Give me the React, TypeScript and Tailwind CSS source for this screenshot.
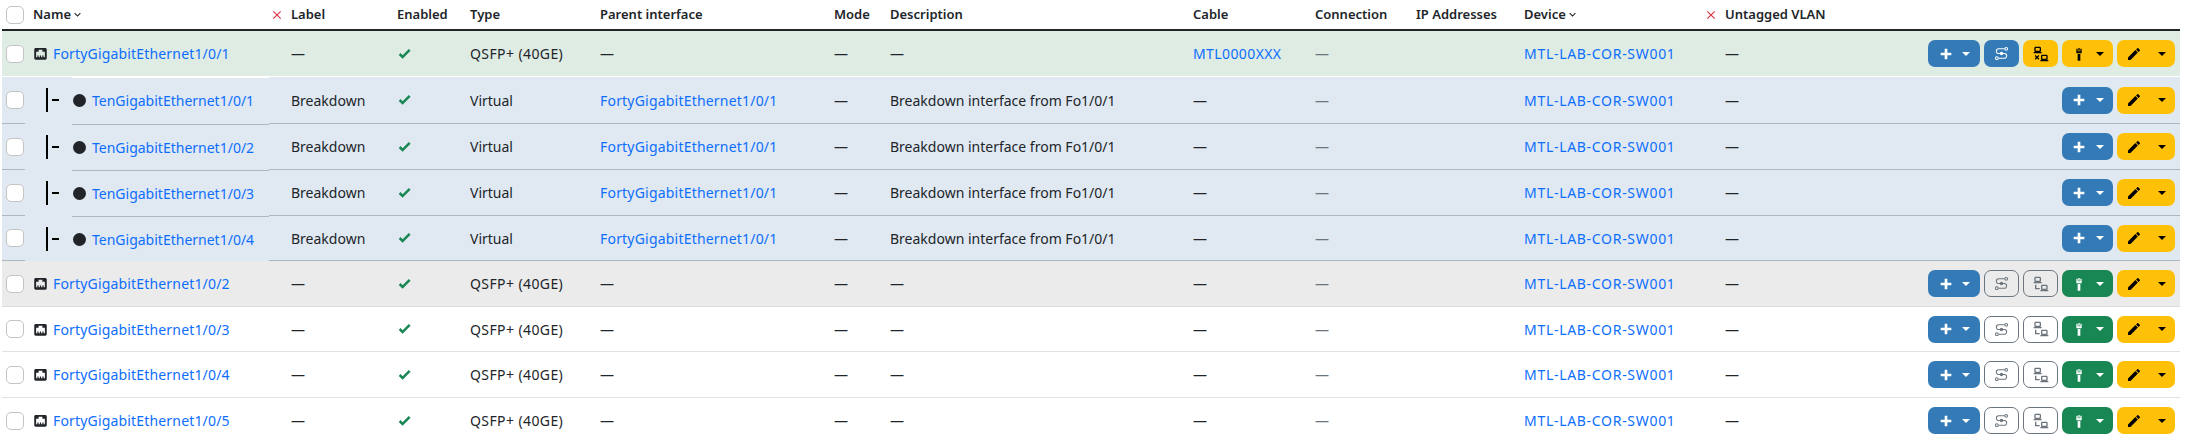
const LINK = "text-[#0d6efd]";

type Kind = "forty" | "ten";
type Row = {
  name: string;
  kind: Kind;
  bg: string;
  line: string;
  height: string;
  cable?: string;
  connected?: boolean;
  first?: boolean;
  last?: boolean;
};

const COLS = [23, 244, 120, 73, 130, 234, 56, 303, 122, 101, 108, 186, 200, 278];

const ROWS: Row[] = [
  { name: "FortyGigabitEthernet1/0/1", kind: "forty", bg: "bg-[#deece4]", line: "border-white", height: "h-[46px]", cable: "MTL0000XXX", connected: true },
  { name: "TenGigabitEthernet1/0/1", kind: "ten", bg: "bg-[#e0e9f2]", line: "border-[#aeb6c0]", height: "h-[47px]", first: true },
  { name: "TenGigabitEthernet1/0/2", kind: "ten", bg: "bg-[#e0e9f2]", line: "border-[#aeb6c0]", height: "h-[46px]" },
  { name: "TenGigabitEthernet1/0/3", kind: "ten", bg: "bg-[#e0e9f2]", line: "border-[#aeb6c0]", height: "h-[46px]" },
  { name: "TenGigabitEthernet1/0/4", kind: "ten", bg: "bg-[#e0e9f2]", line: "border-[#aeb6c0]", height: "h-[45px]", last: true },
  { name: "FortyGigabitEthernet1/0/2", kind: "forty", bg: "bg-[#ebebeb]", line: "border-[#dcdcdc]", height: "h-[46px]" },
  { name: "FortyGigabitEthernet1/0/3", kind: "forty", bg: "bg-white", line: "border-[#dee2e6]", height: "h-[45px]" },
  { name: "FortyGigabitEthernet1/0/4", kind: "forty", bg: "bg-white", line: "border-[#dee2e6]", height: "h-[46px]" },
  { name: "FortyGigabitEthernet1/0/5", kind: "forty", bg: "bg-white", line: "border-[#dee2e6]", height: "h-[46px]" },
];

function Mdi({ d, className }: { d: string; className: string }) {
  return (
    <svg viewBox="0 0 24 24" fill="currentColor" className={className}>
      <path d={d} />
    </svg>
  );
}

const ICONS = {
  plus: "M20 14H14V20H10V14H4V10H10V4H14V10H20V14Z",
  pencil: "M20.71,7.04C21.1,6.65 21.1,6 20.71,5.63L18.37,3.29C18,2.9 17.35,2.9 16.96,3.29L15.12,5.12L18.87,8.87M3,17.25V21H6.75L17.81,9.93L14.06,6.18L3,17.25Z",
  check: "M9,20.42L2.79,14.21L5.62,11.38L9,14.77L18.88,4.88L21.71,7.71L9,20.42Z",
  ethernet: "M7,15H9V18H11V15H13V18H15V15H17V18H19V9H15V6H9V9H5V18H7V15M4.38,3H19.63C20.94,3 22,4.06 22,5.38V19.63A2.37,2.37 0 0,1 19.63,22H4.38C3.06,22 2,20.94 2,19.63V5.38C2,4.06 3.06,3 4.38,3Z",
  cable: "M11,3V7H13V3H11M8,4V11H16V4H14V8H10V4H8M10,12V22H14V12H10Z",
  lan: "M4,1C2.89,1 2,1.89 2,3V7C2,8.11 2.89,9 4,9H1V11H13V9H10C11.11,9 12,8.11 12,7V3C12,1.89 11.11,1 10,1H4M4,3H10V7H4V3M3,13V18L3,20H10V18H5V13H3M14,13C12.89,13 12,13.89 12,15V19C12,20.11 12.89,21 14,21H11V23H23V21H20C21.11,21 22,20.11 22,19V15C22,13.89 21.11,13 20,13H14M14,15H20V19H14V15Z",
  lanOff: "M4,1C2.89,1 2,1.89 2,3V7C2,8.11 2.89,9 4,9H1V11H13V9H10C11.11,9 12,8.11 12,7V3C12,1.89 11.11,1 10,1H4M4,3H10V7H4V3M14,13C12.89,13 12,13.89 12,15V19C12,20.11 12.89,21 14,21H11V23H23V21H20C21.11,21 22,20.11 22,19V15C22,13.89 21.11,13 20,13H14M3.88,13.46L2.46,14.88L4.59,17L2.46,19.12L3.88,20.54L6,18.41L8.12,20.54L9.54,19.12L7.41,17L9.54,14.88L8.12,13.46L6,15.59L3.88,13.46M14,15H20V19H14V15Z",
  chevron: "M7.41,8.58L12,13.17L16.59,8.58L18,10L12,16L6,10L7.41,8.58Z",
  close: "M19,6.41L17.59,5L12,10.59L6.41,5L5,6.41L10.59,12L5,17.59L6.41,19L12,13.41L17.59,19L19,17.59L13.41,12L19,6.41Z",
};

function TraceIcon({ className }: { className: string }) {
  return (
    <svg viewBox="0 0 24 24" fill="none" stroke="currentColor" strokeWidth="1.7" className={className}>
      <path d="M17 4.5H7.5a3.75 3.75 0 0 0 0 7.5h9a3.75 3.75 0 0 1 0 7.5H7" />
      <circle cx="19.5" cy="4.5" r="2.2" />
      <circle cx="4.5" cy="19.5" r="2.2" />
      <circle cx="12" cy="12" r="1.8" fill="currentColor" />
    </svg>
  );
}

function Caret({ dark }: { dark?: boolean }) {
  return (
    <span
      className={`h-0 w-0 border-x-[4px] border-t-[4px] border-x-transparent ${
        dark ? "border-t-black" : "border-t-white"
      }`}
    />
  );
}

function Checkbox() {
  return <span className="block h-[18px] w-[18px] rounded-[5px] border border-[#c4c4c4] bg-white" />;
}

function Actions({ row }: { row: Row }) {
  const btn = "flex h-[27px] items-center rounded-[7px]";
  return (
    <div className="flex justify-end gap-1 pr-[5px]">
      {row.kind === "forty" && (
        <span className={`${btn} w-[52px] justify-between bg-[#337ab7] pl-[10px] pr-[10px] text-white`}>
          <Mdi d={ICONS.plus} className="h-[16px] w-[16px]" />
          <Caret />
        </span>
      )}
      {row.kind === "forty" &&
        (row.connected ? (
          <>
            <span className={`${btn} w-[35px] justify-center bg-[#337ab7] text-white`}>
              <TraceIcon className="h-[15px] w-[15px]" />
            </span>
            <span className={`${btn} w-[35px] justify-center bg-[#ffc107] text-black`}>
              <Mdi d={ICONS.lanOff} className="h-[16px] w-[16px]" />
            </span>
          </>
        ) : (
          <>
            <span className={`${btn} w-[35px] justify-center border border-[#6c757d] text-[#6c757d]`}>
              <TraceIcon className="h-[15px] w-[15px]" />
            </span>
            <span className={`${btn} w-[35px] justify-center border border-[#6c757d] text-[#6c757d]`}>
              <Mdi d={ICONS.lan} className="h-[16px] w-[16px]" />
            </span>
          </>
        ))}
      {row.kind === "ten" ? (
        <span className={`${btn} w-[51px] justify-between bg-[#337ab7] pl-[9px] pr-[9px] text-white`}>
          <Mdi d={ICONS.plus} className="h-[16px] w-[16px]" />
          <Caret />
        </span>
      ) : row.connected ? (
        <span className={`${btn} w-[51px] justify-between bg-[#ffc107] pl-[9px] pr-[9px] text-black`}>
          <Mdi d={ICONS.cable} className="h-[16px] w-[16px]" />
          <Caret dark />
        </span>
      ) : (
        <span className={`${btn} w-[51px] justify-between bg-[#198754] pl-[9px] pr-[9px] text-white`}>
          <Mdi d={ICONS.cable} className="h-[16px] w-[16px]" />
          <Caret />
        </span>
      )}
      <span className={`${btn} w-[58px] justify-between bg-[#ffc107] pl-[9px] pr-[9px] text-black`}>
        <Mdi d={ICONS.pencil} className="h-[16px] w-[16px]" />
        <Caret dark />
      </span>
    </div>
  );
}

function Head({ children, sort }: { children: string; sort?: boolean }) {
  return (
    <th className="border-b-2 border-[#212529] px-2 text-left align-middle text-[13px] font-semibold">
      <span className="flex items-center">
        {children}
        {sort && <Mdi d={ICONS.chevron} className="h-[13px] w-[13px]" />}
      </span>
    </th>
  );
}

function InterfaceRow({ row }: { row: Row }) {
  const td = `border-b ${row.line} px-2 align-middle`;
  const isTen = row.kind === "ten";
  const dash = <span>—</span>;
  return (
    <tr className={`${row.bg} ${row.height}`}>
      <td className={`border-b ${row.line} pl-1 pr-0 align-middle`}>
        <Checkbox />
      </td>
      {isTen ? (
        <td className="p-0 align-top">
          <div className="flex h-full items-stretch">
            <div className="flex w-[47px] items-center pl-[21px]">
              <span className="h-[24px] w-[2px] bg-black" />
              <span className="ml-[4px] h-[2px] w-[7px] bg-black" />
            </div>
            <div
              className={`flex h-[45px] flex-1 items-center border-t ${
                row.first ? "border-white" : "border-[#aeb6c0]"
              }`}
            >
              <span className="ml-px h-[13px] w-[13px] rounded-full bg-[#212529]" />
              <span className={`ml-[6px] ${LINK}`}>{row.name}</span>
            </div>
          </div>
        </td>
      ) : (
        <td className={td}>
          <div className="flex items-center">
            <Mdi d={ICONS.ethernet} className="h-[15px] w-[15px] text-[#212529]" />
            <span className={`ml-[5px] tracking-[0.17px] ${LINK}`}>{row.name}</span>
          </div>
        </td>
      )}
      <td className={`${td} pl-[22px]`}>{isTen ? "Breakdown" : dash}</td>
      <td className={td}>
        <Mdi d={ICONS.check} className="mt-[-1px] h-[15px] w-[15px] text-[#198754]" />
      </td>
      <td className={td}>{isTen ? "Virtual" : <span className="tracking-[0.4px]">QSFP+ (40GE)</span>}</td>
      <td className={td}>
        {isTen ? <span className={`tracking-[0.2px] ${LINK}`}>FortyGigabitEthernet1/0/1</span> : dash}
      </td>
      <td className={td}>{dash}</td>
      <td className={td}>{isTen ? "Breakdown interface from Fo1/0/1" : dash}</td>
      <td className={td}>{row.cable ? <span className={`tracking-[0.4px] ${LINK}`}>{row.cable}</span> : dash}</td>
      <td className={`${td} text-[#6c757d]`}>—</td>
      <td className={td} />
      <td className={td}>
        <span className={`tracking-[0.7px] ${LINK}`}>MTL-LAB-COR-SW001</span>
      </td>
      <td className={`${td} pl-[23px]`}>{dash}</td>
      <td className={`border-b ${row.line} p-0 align-middle`}>
        <Actions row={row} />
      </td>
    </tr>
  );
}

export default function App() {
  return (
    <div className="h-[438px] overflow-hidden bg-white pl-[2px] font-['Noto_Sans',sans-serif] text-[14px] text-[#212529]">
      <table className="w-[2178px] table-fixed border-separate border-spacing-0">
        <colgroup>
          {COLS.map((w, i) => (
            <col key={i} style={{ width: w }} />
          ))}
        </colgroup>
        <thead>
          <tr className="h-[31px]">
            <th className="border-b-2 border-[#212529] pl-1 pr-0 align-middle">
              <Checkbox />
            </th>
            <Head sort>Name</Head>
            <th className="border-b-2 border-[#212529] pl-[22px] pr-2 text-left align-middle text-[13px] font-semibold">
              <span className="flex items-center">
                <Mdi d={ICONS.close} className="mr-[7px] ml-[-21px] h-[14px] w-[14px] text-[#dc3545]" />
                Label
              </span>
            </th>
            <Head>Enabled</Head>
            <Head>Type</Head>
            <Head>Parent interface</Head>
            <Head>Mode</Head>
            <Head>Description</Head>
            <Head>Cable</Head>
            <Head>Connection</Head>
            <Head>IP Addresses</Head>
            <Head sort>Device</Head>
            <th className="border-b-2 border-[#212529] pl-[23px] pr-2 text-left align-middle text-[13px] font-semibold">
              <span className="flex items-center">
                <Mdi d={ICONS.close} className="mr-[7px] ml-[-21px] h-[14px] w-[14px] text-[#dc3545]" />
                Untagged VLAN
              </span>
            </th>
            <th className="border-b-2 border-[#212529]" />
          </tr>
        </thead>
        <tbody>
          {ROWS.map((row) => (
            <InterfaceRow key={row.name} row={row} />
          ))}
        </tbody>
      </table>
    </div>
  );
}
